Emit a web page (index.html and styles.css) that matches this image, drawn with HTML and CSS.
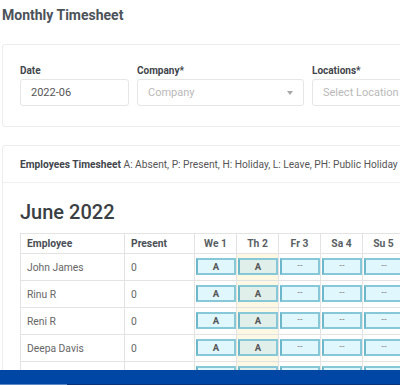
FILE: index.html
```html
<!DOCTYPE html>
<html>
<head>
<meta charset="utf-8">
<link rel="stylesheet" href="styles.css">
</head>
<body>
<div class="page">
  <h1 class="title">Monthly Timesheet</h1>
  <div class="card filters">
    <div class="field f-date">
      <label class="label">Date</label>
      <div class="input">2022-06</div>
    </div>
    <div class="field f-company">
      <label class="label">Company*</label>
      <div class="input placeholder select">Company<span class="caret"></span></div>
    </div>
    <div class="field f-loc">
      <label class="label">Locations*</label>
      <div class="input placeholder">Select Location</div>
    </div>
  </div>
  <div class="card sheet">
    <div class="sheet-head"><b>Employees Timesheet</b> A: Absent, P: Present, H: Holiday, L: Leave, PH: Public Holiday</div>
    <div class="sheet-body">
      <h2 class="month">June 2022</h2>
      <table class="grid">
        <thead>
          <tr>
            <th class="c-emp">Employee</th>
            <th class="c-pre">Present</th>
            <th class="c-day">We 1</th>
            <th class="c-day">Th 2</th>
            <th class="c-day">Fr 3</th>
            <th class="c-day">Sa 4</th>
            <th class="c-day">Su 5</th>
          </tr>
        </thead>
        <tbody>
          <tr>
            <td>John James</td><td>0</td>
            <td class="day"><div class="box">A</div></td>
            <td class="day today"><div class="box">A</div></td>
            <td class="day"><div class="box dash">--</div></td>
            <td class="day"><div class="box dash">--</div></td>
            <td class="day"><div class="box dash">--</div></td>
          </tr>
          <tr>
            <td>Rinu R</td><td>0</td>
            <td class="day"><div class="box">A</div></td>
            <td class="day today"><div class="box">A</div></td>
            <td class="day"><div class="box dash">--</div></td>
            <td class="day"><div class="box dash">--</div></td>
            <td class="day"><div class="box dash">--</div></td>
          </tr>
          <tr>
            <td>Reni R</td><td>0</td>
            <td class="day"><div class="box">A</div></td>
            <td class="day today"><div class="box">A</div></td>
            <td class="day"><div class="box dash">--</div></td>
            <td class="day"><div class="box dash">--</div></td>
            <td class="day"><div class="box dash">--</div></td>
          </tr>
          <tr>
            <td>Deepa Davis</td><td>0</td>
            <td class="day"><div class="box">A</div></td>
            <td class="day today"><div class="box">A</div></td>
            <td class="day"><div class="box dash">--</div></td>
            <td class="day"><div class="box dash">--</div></td>
            <td class="day"><div class="box dash">--</div></td>
          </tr>
          <tr>
            <td>Anu Thomas</td><td>0</td>
            <td class="day"><div class="box">A</div></td>
            <td class="day today"><div class="box">A</div></td>
            <td class="day"><div class="box dash">--</div></td>
            <td class="day"><div class="box dash">--</div></td>
            <td class="day"><div class="box dash">--</div></td>
          </tr>
        </tbody>
      </table>
    </div>
  </div>
</div>
<div class="bottombar"></div>
</body>
</html>
```

FILE: styles.css
```css
html, body {
  margin: 0;
  padding: 0;
  background: #ffffff;
  overflow: hidden;
}
body {
  font-family: Roboto, "Liberation Sans", sans-serif;
  color: #495057;
}
.page {
  width: 620px;
  padding: 0 0 0 2px;
}
.title {
  margin: 0;
  padding-top: 5px;
  height: 39px;
  font-size: 14px;
  line-height: 20px;
  font-weight: 700;
  color: #4b5259;
}
.card {
  border: 1px solid #ececec;
  border-radius: 3px;
  background: #fff;
}
.filters {
  display: flex;
  gap: 8px;
  padding: 20px 17px 20px;
}
.field {
  display: flex;
  flex-direction: column;
}
.f-date { width: 109px; }
.f-company { width: 167px; }
.f-loc { width: 200px; }
.label {
  font-size: 10px;
  line-height: 12px;
  font-weight: 700;
  color: #3f454b;
  margin-bottom: 2px;
}
.input {
  position: relative;
  height: 25px;
  border: 1px solid #e6e6e6;
  border-radius: 3px;
  padding: 0 10px;
  font-size: 11px;
  line-height: 25px;
  color: #555;
}
.placeholder { color: #b9b9b9; }
.caret {
  position: absolute;
  right: 10px;
  top: 11px;
  width: 0;
  height: 0;
  border-left: 3px solid transparent;
  border-right: 3px solid transparent;
  border-top: 4px solid #a8a8a8;
}
.sheet {
  margin-top: 18px;
}
.sheet-head {
  height: 36px;
  padding: 0 17px;
  border-bottom: 1px solid #efefef;
  font-size: 10.2px;
  line-height: 37px;
  color: #555;
  white-space: nowrap;
}
.sheet-head b {
  color: #3f454b;
}
.sheet-body {
  padding: 17px 17px 0;
}
.month {
  margin: 0 0 8px;
  font-size: 20px;
  line-height: 25px;
  font-weight: 500;
  color: #3a3f44;
}
.grid {
  border-collapse: collapse;
  font-size: 10.3px;
  color: #666;
}
.grid th, .grid td {
  border: 1px solid #e3e3e3;
  padding: 0 6px;
  text-align: left;
}
.grid th {
  height: 19px;
  font-weight: 700;
  color: #4a4f55;
}
.grid td {
  height: 26px;
}
.c-emp { width: 91px; }
.c-pre { width: 57px; }
.grid th.c-day {
  width: 41px;
  padding: 0;
  text-align: center;
  color: #5a5f64;
}
.grid td.day {
  padding: 0 0 0 1px;
  vertical-align: top;
}
.today { background: #fcf8e3; }
.box {
  margin-top: 4px;
  height: 13px;
  border: 2px solid #86c8d8;
  border-left-color: #6db7cb;
  background: #e0f7fd;
  text-align: center;
  font-size: 9.5px;
  line-height: 13px;
  font-weight: 700;
  color: #555;
}
.today .box { background: #e1efea; }
.box.dash { font-size: 7px; color: #888; }
.bottombar {
  position: fixed;
  left: 0;
  right: 0;
  bottom: 0;
  height: 15px;
  background: #0047a5;
}
.bottombar::after {
  content: "";
  position: absolute;
  left: 0;
  right: 0;
  bottom: 0;
  height: 1px;
  background: linear-gradient(to right, #5d88c6 0, #5d88c6 67px, #0a3477 67px);
}
```
